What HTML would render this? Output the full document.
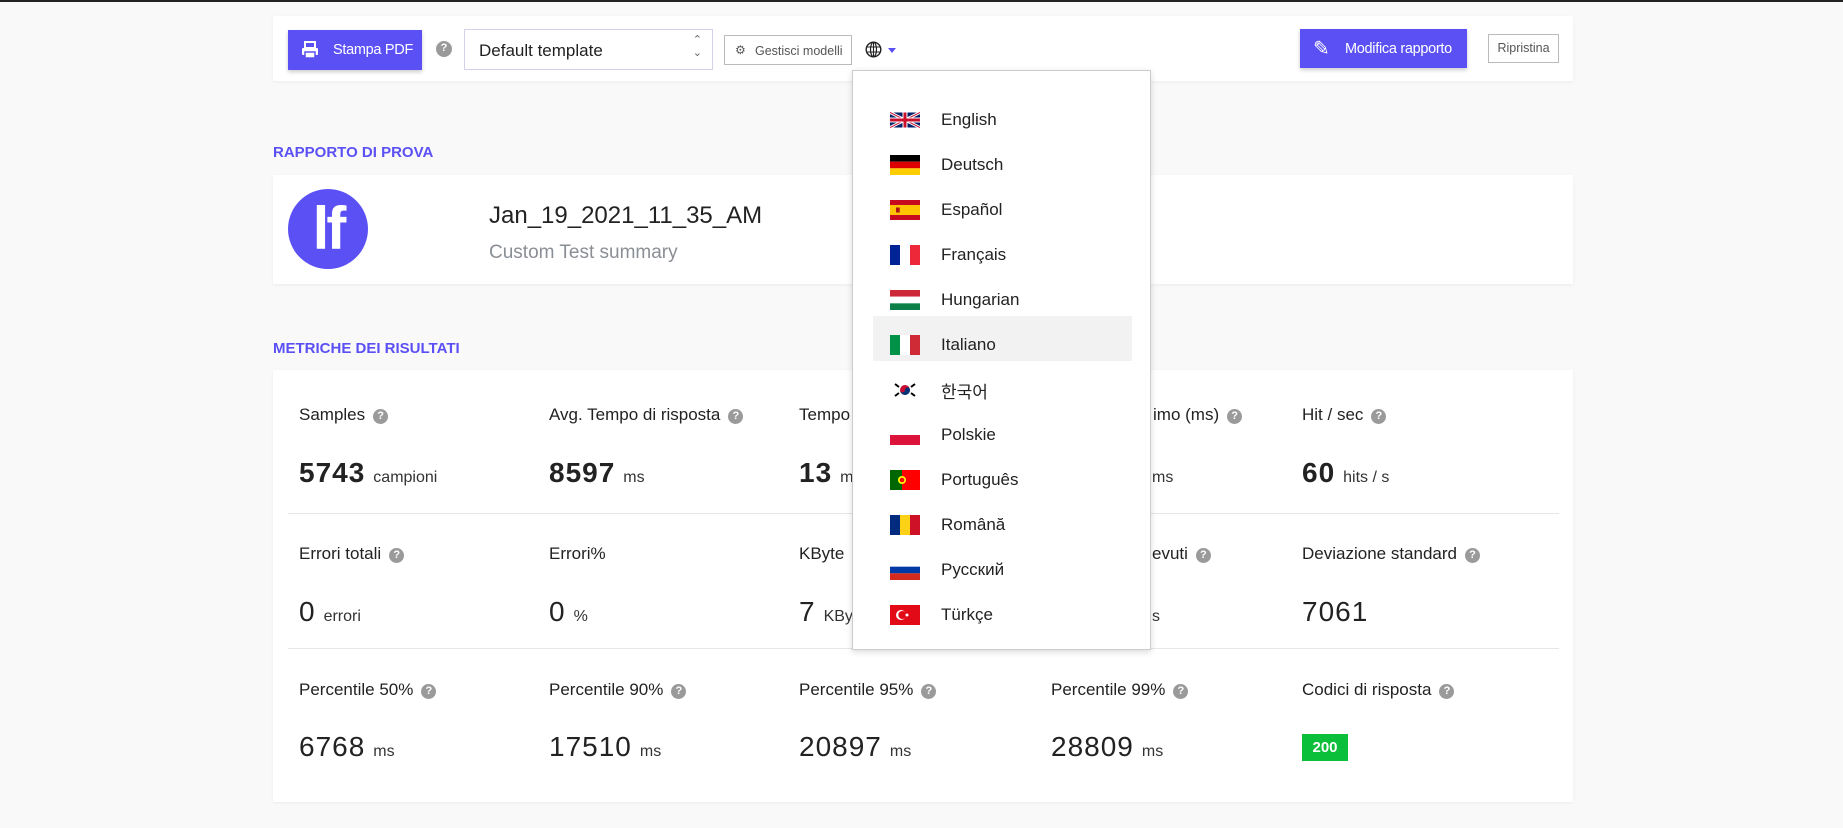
<!DOCTYPE html>
<html><head><meta charset="utf-8"><style>
*{box-sizing:border-box;margin:0;padding:0}
body{width:1843px;height:828px;background:#f9f9f9;font-family:"Liberation Sans","Noto Sans CJK KR",sans-serif;color:#222;position:relative;overflow:hidden;border-top:2px solid #222}
.abs{position:absolute;white-space:nowrap}
.card{position:absolute;background:#fff;box-shadow:0 1px 3px rgba(0,0,0,.06)}
.btnp{position:absolute;background:#5b50f4;color:#fff;font-size:16px;display:flex;align-items:center;box-shadow:0 2px 4px rgba(0,0,0,.2);white-space:nowrap}
.q{display:inline-block;width:15px;height:15px;border-radius:50%;background:#9a9a9a;color:#fff;font-size:11px;font-weight:bold;text-align:center;line-height:15px;vertical-align:1px;margin-left:8px}
.sec{position:absolute;left:273px;color:#5b50f4;font-weight:bold;font-size:15px}
.lbl{position:absolute;font-size:17px;color:#222;white-space:nowrap}
.val{position:absolute;font-size:28px;letter-spacing:1px;white-space:nowrap}
.val small{font-size:16px;letter-spacing:0;margin-left:8px;color:#333}
.b{font-weight:bold}
.l{font-weight:normal;color:#222}
.hr{position:absolute;left:288px;width:1271px;height:1px;background:#e6e6e6}
.dd{position:absolute;left:852px;top:68px;width:299px;height:580px;background:#fff;border:1px solid #ccc;box-shadow:0 2px 6px rgba(0,0,0,.15)}
.it{position:absolute;left:0;width:297px;height:44px;display:flex;align-items:center;font-size:17px}
.it .f{position:absolute;left:37px;width:30px;height:20px}
.it span{position:absolute;left:88px}
</style></head><body>
<div class="card" style="left:273px;top:14px;width:1300px;height:65px"></div>
<div class="btnp" style="left:288px;top:28px;width:134px;height:40px"><svg class="abs" style="left:13px;top:11px" width="18" height="18" viewBox="0 0 18 18"><rect x="4" y="1" width="10" height="6" fill="none" stroke="#fff" stroke-width="2"/><rect x="1" y="7" width="16" height="7" rx="1" fill="#fff"/><rect x="4" y="11" width="10" height="6" fill="#fff" stroke="#5b50f4" stroke-width="1.5"/></svg><span class="abs" style="left:45px;font-size:14.5px;letter-spacing:-.3px">Stampa PDF</span></div>
<div class="q abs" style="left:436px;top:39px;width:16px;height:16px;margin:0">?</div>
<div class="abs" style="left:464px;top:27px;width:249px;height:41px;border:1px solid #d4d2e8;background:#fff;font-size:17px;padding:11px 0 0 14px">Default template<span class="abs" style="right:10px;top:4px;font-size:11px;color:#666;line-height:13px">&#8963;<br>&#8964;</span></div>
<div class="abs" style="left:724px;top:33px;width:128px;height:30px;border:1px solid #bbb;background:#fff;font-size:12.5px;color:#555;padding:8px 0 0 30px"><span class="abs" style="left:10px;top:7px;font-size:12px">⚙</span>Gestisci modelli</div>
<svg class="abs" style="left:865px;top:39px" width="17" height="17" viewBox="0 0 17 17"><circle cx="8.5" cy="8.5" r="7.3" fill="none" stroke="#222" stroke-width="1.4"/><ellipse cx="8.5" cy="8.5" rx="3" ry="7.3" fill="none" stroke="#222" stroke-width="1.2"/><path d="M1.5 6h14M1.5 11h14M8.5 1v15" stroke="#222" stroke-width="1.1"/></svg>
<div class="abs" style="left:888px;top:46px;border:4px solid transparent;border-top:5px solid #5b50f4"></div>
<div class="btnp" style="left:1300px;top:27px;width:167px;height:39px"><span class="abs" style="left:13px;top:7px;font-size:20px">✎</span><span class="abs" style="left:45px;font-size:14.5px;letter-spacing:-.3px">Modifica rapporto</span></div>
<div class="abs" style="left:1488px;top:32px;width:71px;height:29px;border:1px solid #bbb;background:#fff;font-size:12.5px;color:#555;text-align:center;line-height:27px">Ripristina</div>

<div class="sec" style="top:142px">RAPPORTO DI PROVA</div>
<div class="card" style="left:273px;top:173px;width:1300px;height:109px"></div>
<div class="abs" style="left:288px;top:187px;width:80px;height:80px;border-radius:50%;background:#5b50f4;color:#fff;font-weight:bold;font-size:60px;text-align:center;line-height:80px;letter-spacing:-3px">lf</div>
<div class="abs" style="left:489px;top:200px;font-size:24px">Jan_19_2021_11_35_AM</div>
<div class="abs" style="left:489px;top:240px;font-size:19px;color:#8a8f95">Custom Test summary</div>

<div class="sec" style="top:338px">METRICHE DEI RISULTATI</div>
<div class="card" style="left:273px;top:368px;width:1300px;height:432px"></div>

<div class="lbl" style="left:299px;top:403px">Samples<span class="q">?</span></div>
<div class="lbl" style="left:549px;top:403px">Avg. Tempo di risposta<span class="q">?</span></div>
<div class="lbl" style="left:799px;top:403px">Tempo</div>
<div class="lbl" style="left:1153px;top:403px">imo (ms)<span class="q">?</span></div>
<div class="lbl" style="left:1302px;top:403px">Hit / sec<span class="q">?</span></div>
<div class="val b" style="left:299px;top:455px">5743<small class="l">campioni</small></div>
<div class="val b" style="left:549px;top:455px">8597<small class="l">ms</small></div>
<div class="val b" style="left:799px;top:455px">13<small class="l">m</small></div>
<div class="val" style="left:1152px;top:455px"><small style="margin:0">ms</small></div>
<div class="val b" style="left:1302px;top:455px">60<small class="l">hits / s</small></div>
<div class="hr" style="top:511px"></div>

<div class="lbl" style="left:299px;top:542px">Errori totali<span class="q">?</span></div>
<div class="lbl" style="left:549px;top:542px">Errori%</div>
<div class="lbl" style="left:799px;top:542px">KByte</div>
<div class="lbl" style="left:1152px;top:542px">evuti<span class="q">?</span></div>
<div class="lbl" style="left:1302px;top:542px">Deviazione standard<span class="q">?</span></div>
<div class="val" style="left:299px;top:594px">0<small>errori</small></div>
<div class="val" style="left:549px;top:594px">0<small>%</small></div>
<div class="val" style="left:799px;top:594px">7<small>KBy</small></div>
<div class="val" style="left:1152px;top:594px"><small style="margin:0">s</small></div>
<div class="val" style="left:1302px;top:594px">7061</div>
<div class="hr" style="top:646px"></div>

<div class="lbl" style="left:299px;top:678px">Percentile 50%<span class="q">?</span></div>
<div class="lbl" style="left:549px;top:678px">Percentile 90%<span class="q">?</span></div>
<div class="lbl" style="left:799px;top:678px">Percentile 95%<span class="q">?</span></div>
<div class="lbl" style="left:1051px;top:678px">Percentile 99%<span class="q">?</span></div>
<div class="lbl" style="left:1302px;top:678px">Codici di risposta<span class="q">?</span></div>
<div class="val" style="left:299px;top:729px">6768<small>ms</small></div>
<div class="val" style="left:549px;top:729px">17510<small>ms</small></div>
<div class="val" style="left:799px;top:729px">20897<small>ms</small></div>
<div class="val" style="left:1051px;top:729px">28809<small>ms</small></div>
<div class="abs" style="left:1302px;top:732px;width:46px;height:27px;background:#0cbf3a;color:#fff;font-weight:bold;font-size:15px;text-align:center;line-height:27px">200</div>

<div class="dd">
<div class="abs" style="left:20px;top:245px;width:259px;height:45px;background:#f2f2f2"></div>
<div class="it" style="top:27px"><svg class="f" viewBox="0 0 60 30"><rect width="60" height="30" fill="#012169"/><path d="M0 0L60 30M60 0L0 30" stroke="#fff" stroke-width="6"/><path d="M0 0L60 30M60 0L0 30" stroke="#c8102e" stroke-width="2"/><path d="M30 0v30M0 15h60" stroke="#fff" stroke-width="10"/><path d="M30 0v30M0 15h60" stroke="#c8102e" stroke-width="6"/></svg><span>English</span></div>
<div class="it" style="top:72px"><svg class="f" viewBox="0 0 3 3" preserveAspectRatio="none"><rect width="3" height="1" fill="#000"/><rect y="1" width="3" height="1" fill="#dd0000"/><rect y="2" width="3" height="1" fill="#ffce00"/></svg><span>Deutsch</span></div>
<div class="it" style="top:117px"><svg class="f" viewBox="0 0 4 4" preserveAspectRatio="none"><rect width="4" height="4" fill="#c60b1e"/><rect y="1" width="4" height="2" fill="#ffc400"/><rect x=".8" y="1.5" width=".5" height="1" fill="#ad1519"/></svg><span>Español</span></div>
<div class="it" style="top:162px"><svg class="f" viewBox="0 0 3 3" preserveAspectRatio="none"><rect width="1" height="3" fill="#002395"/><rect x="1" width="1" height="3" fill="#fff"/><rect x="2" width="1" height="3" fill="#ed2939"/></svg><span>Français</span></div>
<div class="it" style="top:207px"><svg class="f" viewBox="0 0 3 3" preserveAspectRatio="none"><rect width="3" height="1" fill="#ce2939"/><rect y="1" width="3" height="1" fill="#fff"/><rect y="2" width="3" height="1" fill="#0f7f49"/></svg><span>Hungarian</span></div>
<div class="it" style="top:252px"><svg class="f" viewBox="0 0 3 3" preserveAspectRatio="none"><rect width="1" height="3" fill="#009246"/><rect x="1" width="1" height="3" fill="#fff"/><rect x="2" width="1" height="3" fill="#ce2b37"/></svg><span>Italiano</span></div>
<div class="it" style="top:297px"><svg class="f" viewBox="0 0 30 20"><circle cx="15" cy="10" r="5" fill="#c60c30"/><path d="M10 10a5 5 0 0 0 10 0a2.5 2.5 0 0 0-5 0a2.5 2.5 0 0 1-5 0" fill="#003478"/><path d="M5 4l4 3M21 7l4-3M5 16l4-3M21 13l4 3" stroke="#000" stroke-width="2"/></svg><span>한국어</span></div>
<div class="it" style="top:342px"><svg class="f" viewBox="0 0 2 2" preserveAspectRatio="none"><rect width="2" height="1" fill="#fff"/><rect y="1" width="2" height="1" fill="#dc143c"/></svg><span>Polskie</span></div>
<div class="it" style="top:387px"><svg class="f" viewBox="0 0 30 20"><rect width="30" height="20" fill="#f00"/><rect width="12" height="20" fill="#060"/><circle cx="12" cy="10" r="4" fill="#ff0"/><circle cx="12" cy="10" r="2.3" fill="#f00"/></svg><span>Português</span></div>
<div class="it" style="top:432px"><svg class="f" viewBox="0 0 3 3" preserveAspectRatio="none"><rect width="1" height="3" fill="#002b7f"/><rect x="1" width="1" height="3" fill="#fcd116"/><rect x="2" width="1" height="3" fill="#ce1126"/></svg><span>Română</span></div>
<div class="it" style="top:477px"><svg class="f" viewBox="0 0 3 3" preserveAspectRatio="none"><rect width="3" height="1" fill="#fff"/><rect y="1" width="3" height="1" fill="#0039a6"/><rect y="2" width="3" height="1" fill="#d52b1e"/></svg><span>Русский</span></div>
<div class="it" style="top:522px"><svg class="f" viewBox="0 0 30 20"><rect width="30" height="20" fill="#e30a17"/><circle cx="11" cy="10" r="5" fill="#fff"/><circle cx="12.3" cy="10" r="4" fill="#e30a17"/><circle cx="17" cy="10" r="1.5" fill="#fff"/></svg><span>Türkçe</span></div>
</div>
</body></html>
